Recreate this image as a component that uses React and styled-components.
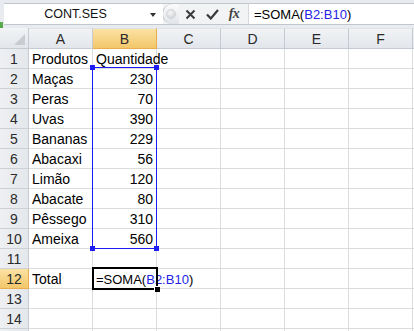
import React from "react";
import styled, { createGlobalStyle, css } from "styled-components";

const Global = createGlobalStyle`
  html, body { margin: 0; padding: 0; background: #fff; overflow: hidden; }
  body { font-family: "Liberation Sans", Arial, sans-serif; }
`;

const Page = styled.div`
  position: relative;
  width: 414px;
  height: 331px;
  overflow: hidden;
  background: #fff;
`;

const TopBar = styled.div`
  display: flex;
  align-items: stretch;
  height: 28px;
  box-sizing: border-box;
  padding: 3px 0 3px 0;
  background: #e8ebef;
`;

const LeftEdge = styled.div`
  width: 4px;
  background: #e8ebef;
`;

const NameBox = styled.div`
  width: 159px;
  box-sizing: border-box;
  background: #fff;
  border-top: 1px solid #c2c7ce;
  border-bottom: 1px solid #c2c7ce;
  display: flex;
  align-items: center;
  position: relative;
  font-size: 12.5px;
  color: #111;
`;

const NameText = styled.span`
  flex: 1;
  text-align: center;
  padding-right: 16px;
`;

const DropArrow = styled.span`
  position: absolute;
  right: 7px;
  top: 9px;
  width: 0;
  height: 0;
  border-left: 3.5px solid transparent;
  border-right: 3.5px solid transparent;
  border-top: 4px solid #333;
`;

const ToolArea = styled.div`
  width: 85px;
  display: flex;
  align-items: center;
  background: #f1f3f5;
  border-top: 1px solid #c2c7ce;
  border-bottom: 1px solid #c2c7ce;
  box-sizing: border-box;
`;

const Grip = styled.div`
  width: 17px;
  height: 100%;
  box-sizing: border-box;
  border-radius: 10px 0 0 10px;
  border-left: 1px solid #b9bec5;
  background: linear-gradient(#fbfbfc, #e1e4e8);
  display: flex;
  align-items: center;
  justify-content: center;
  margin-left: -1px;
`;

const Dimple = styled.div`
  width: 8px;
  height: 8px;
  border-radius: 50%;
  background: radial-gradient(circle at 40% 35%, #f7f7f7, #c9ccd0);
  border: 1px solid #d2d5d9;
`;

const IconBtn = styled.div`
  width: 22px;
  display: flex;
  align-items: center;
  justify-content: center;
  color: #3a3a3a;
`;

const Fx = styled.span`
  font-family: "Liberation Serif", "Times New Roman", serif;
  font-style: italic;
  font-weight: bold;
  font-size: 14px;
  color: #444;
  letter-spacing: -0.5px;
`;

const FormulaInput = styled.div`
  flex: 1;
  background: #fff;
  border-top: 1px solid #c2c7ce;
  border-bottom: 1px solid #c2c7ce;
  border-left: 1px solid #d5d9de;
  box-sizing: border-box;
  display: flex;
  align-items: center;
  padding-left: 5px;
  font-size: 13px;
  color: #000;
  white-space: nowrap;
`;

const Ref = styled.span`
  color: #2424e6;
`;

const GreenStrip = styled.div`
  position: absolute;
  left: 0;
  top: 22px;
  width: 3px;
  height: 27px;
  background: linear-gradient(#5fae4f, #2f8a34);
`;

const Sheet = styled.div`
  display: grid;
  grid-template-columns: 29px repeat(7, 64px);
  grid-auto-rows: 20px;
  grid-template-rows: 21px;
  font-size: 14px;
  position: relative;
`;

const headerBase = css`
  box-sizing: border-box;
  border-right: 1px solid #c6cbd1;
  border-bottom: 1px solid #c6cbd1;
  display: flex;
  align-items: center;
  justify-content: center;
  color: #2a2a2a;
  background: ${(p) =>
    p.$active
      ? "linear-gradient(#fbe2a4, #f3c76a)"
      : "linear-gradient(#f1f3f5, #e2e6eb)"};
  ${(p) =>
    p.$active &&
    css`
      border-right-color: #e9ad4d;
      border-bottom-color: #e9ad4d;
    `}
`;

const Corner = styled.div`
  ${headerBase};
  position: relative;
  &::after {
    content: "";
    position: absolute;
    right: 3px;
    bottom: 3px;
    width: 0;
    height: 0;
    border-left: 11px solid transparent;
    border-bottom: 11px solid #c9cdd2;
  }
`;

const ColHead = styled.div`
  ${headerBase};
  border-top: 1px solid #dfe2e6;
`;

const RowHead = styled.div`
  ${headerBase};
  background: ${(p) =>
    p.$active
      ? "linear-gradient(#fbe2a4, #f3c76a)"
      : "linear-gradient(90deg, #eef0f3, #e4e7eb)"};
  border-bottom-color: ${(p) => (p.$active ? "#e9ad4d" : "#cdd1d6")};
`;

const Cell = styled.div`
  box-sizing: border-box;
  border-right: 1px solid #dadcdd;
  border-bottom: 1px solid #dadcdd;
  display: flex;
  align-items: center;
  justify-content: ${(p) => (p.$num ? "flex-end" : "flex-start")};
  padding: ${(p) => (p.$num ? "1px 3px 0 0" : "1px 0 0 3px")};
  white-space: nowrap;
  overflow: visible;
  position: relative;
  z-index: ${(p) => (p.$over ? 2 : 0)};
  color: #000;
  font-size: ${(p) => (p.$small ? "13px" : "14px")};
`;

const Selection = styled.div`
  position: absolute;
  left: 92px;
  top: 39px;
  width: 65px;
  height: 182px;
  box-sizing: border-box;
  border: 1px solid #1c1cf5;
  pointer-events: none;
  z-index: 3;
`;

const Handle = styled.div`
  position: absolute;
  width: 5px;
  height: 5px;
  background: #1c1cf5;
  ${(p) => (p.$top ? "top: -3px;" : "bottom: -3px;")}
  ${(p) => (p.$left ? "left: -3px;" : "right: -3px;")}
`;

const ActiveCell = styled.div`
  position: absolute;
  left: 92px;
  top: 239px;
  width: 66px;
  height: 23px;
  box-sizing: border-box;
  border: 2px solid #000;
  pointer-events: none;
  z-index: 3;
`;

const FillHandle = styled.div`
  position: absolute;
  right: -4px;
  bottom: -4px;
  width: 5px;
  height: 5px;
  background: #000;
  border-left: 1px solid #fff;
  border-top: 1px solid #fff;
`;

const cols = ["A", "B", "C", "D", "E", "F", ""];
const data = [
  ["Produtos", "Quantidade"],
  ["Maças", 230],
  ["Peras", 70],
  ["Uvas", 390],
  ["Bananas", 229],
  ["Abacaxi", 56],
  ["Limão", 120],
  ["Abacate", 80],
  ["Pêssego", 310],
  ["Ameixa", 560],
  [],
  ["Total", "formula"],
  [],
  [],
  [],
];

const FormulaText = () => (
  <>
    =SOMA(<Ref>B2:B10</Ref>)
  </>
);

export default function App() {
  return (
    <Page>
      <Global />
      <TopBar>
        <LeftEdge />
        <NameBox>
          <NameText>CONT.SES</NameText>
          <DropArrow />
        </NameBox>
        <ToolArea>
          <Grip>
            <Dimple />
          </Grip>
          <IconBtn>
            <svg width="11" height="11" viewBox="0 0 11 11">
              <path d="M1.5 1.5 L9.5 9.5 M9.5 1.5 L1.5 9.5" stroke="#3a3a3a" strokeWidth="2" />
            </svg>
          </IconBtn>
          <IconBtn>
            <svg width="13" height="11" viewBox="0 0 13 11">
              <path d="M1 5.5 L4.8 9.5 L12 1" stroke="#3a3a3a" strokeWidth="2.2" fill="none" />
            </svg>
          </IconBtn>
          <IconBtn>
            <Fx>fx</Fx>
          </IconBtn>
        </ToolArea>
        <FormulaInput>
          <FormulaText />
        </FormulaInput>
      </TopBar>
      <GreenStrip />
      <Sheet>
        <Corner />
        {cols.map((c, i) => (
          <ColHead key={i} $active={c === "B"}>
            {c}
          </ColHead>
        ))}
        {data.map((row, r) => (
          <React.Fragment key={r}>
            <RowHead $active={r === 11}>{r < 14 ? r + 1 : ""}</RowHead>
            {cols.map((c, ci) => {
              const v = row[ci];
              if (v === "formula") {
                return (
                  <Cell key={ci} $over $small>
                    <FormulaText />
                  </Cell>
                );
              }
              return (
                <Cell key={ci} $num={typeof v === "number"}>
                  {v}
                </Cell>
              );
            })}
          </React.Fragment>
        ))}
        <Selection>
          <Handle $top $left />
          <Handle $top />
          <Handle $left />
          <Handle />
        </Selection>
        <ActiveCell>
          <FillHandle />
        </ActiveCell>
      </Sheet>
    </Page>
  );
}
